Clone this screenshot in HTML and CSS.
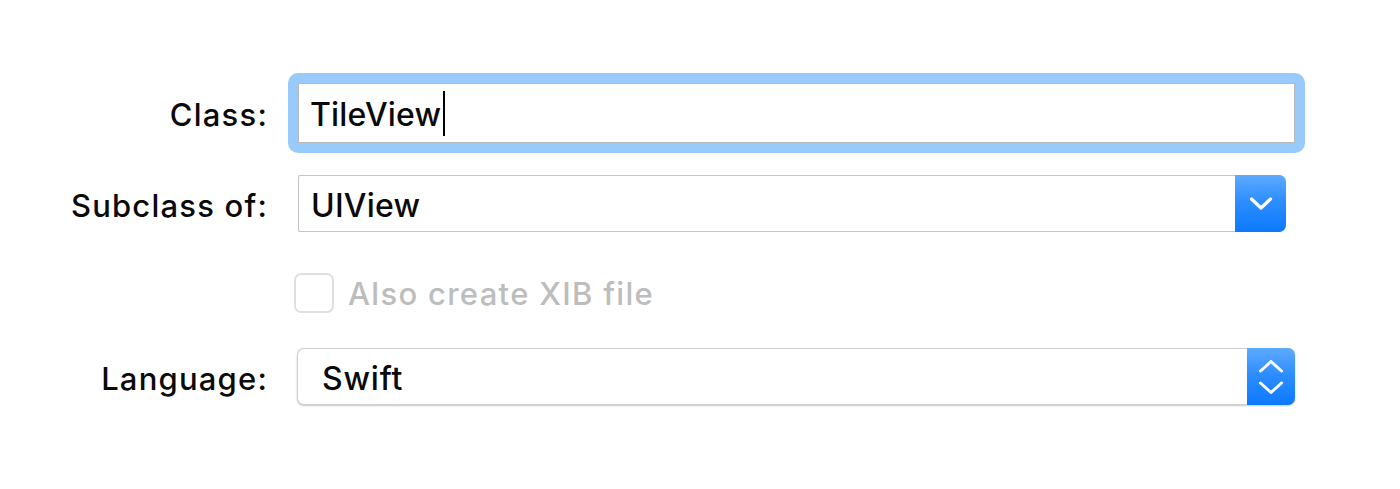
FILE: index.html
```html
<!DOCTYPE html>
<html lang="en">
<head>
<meta charset="utf-8">
<title>New File</title>
<link rel="stylesheet" href="styles.css">
</head>
<body>
<main class="form">
  <div class="row row-class">
    <label class="label">Class:</label>
    <div class="focus-ring">
      <div class="text-field"><span class="value">TileView</span><span class="caret"></span></div>
    </div>
  </div>

  <div class="row row-subclass">
    <label class="label">Subclass of:</label>
    <div class="popup popup-combo">
      <span class="value">UIView</span>
      <span class="popup-button combo-button">
        <svg width="24" height="14" viewBox="0 0 24 14"><path d="M2.5 2 L12 11 L21.5 2" fill="none" stroke="#fff" stroke-width="3.2" stroke-linecap="round" stroke-linejoin="round"/></svg>
      </span>
    </div>
  </div>

  <div class="row row-check">
    <span class="label"></span>
    <div class="checkbox-wrap">
      <span class="checkbox"></span>
      <span class="check-label">Also create XIB file</span>
    </div>
  </div>

  <div class="row row-language">
    <label class="label">Language:</label>
    <div class="popup popup-select">
      <span class="value">Swift</span>
      <span class="popup-button select-button">
        <svg width="26" height="36" viewBox="0 0 26 36"><path d="M2.5 12 L13 2.5 L23.5 12" fill="none" stroke="#fff" stroke-width="3" stroke-linecap="round" stroke-linejoin="round"/><path d="M2.5 24 L13 33.5 L23.5 24" fill="none" stroke="#fff" stroke-width="3" stroke-linecap="round" stroke-linejoin="round"/></svg>
      </span>
    </div>
  </div>
</main>
</body>
</html>
```

FILE: styles.css
```css
html, body {
  margin: 0;
  padding: 0;
  background: #ffffff;
}

body {
  font-family: Inter, "Liberation Sans", Arial, sans-serif;
  color: #111111;
  width: 1400px;
  height: 489px;
  overflow: hidden;
}

.form {
  display: flex;
  flex-direction: column;
  padding-top: 73px;
}

.row {
  display: flex;
  align-items: baseline;
}

.label {
  width: 268px;
  flex: 0 0 268px;
  text-align: right;
  font-size: 31px;
  font-weight: 500;
  letter-spacing: 1.2px;
  margin-right: -1px;
  color: #0a0a0a;
}

/* Row 1: focused text field */
.focus-ring {
  margin-left: 21px;
  padding: 10px;
  border-radius: 10px;
  background: #98cbfb;
}

.text-field {
  width: 997px;
  height: 60px;
  box-sizing: border-box;
  border: 1px solid #b9b9b9;
  background: #fff;
  display: flex;
  align-items: baseline;
  padding: 3px 0 0 11px;
  line-height: 55px;
}

.text-field .value {
  font-size: 32px;
  font-weight: 500;
  letter-spacing: 0.2px;
  color: #0a0a0a;
}

.caret {
  display: inline-block;
  width: 2px;
  height: 45px;
  background: #000;
  margin-left: 2px;
  align-self: center;
  margin-top: -2px;
}

/* Popups */
.popup {
  display: flex;
  align-items: stretch;
  background: #fff;
  box-sizing: border-box;
}

.popup .value {
  flex: 1;
  font-size: 32px;
  font-weight: 500;
  letter-spacing: 0.2px;
  color: #0a0a0a;
}

.popup-button {
  display: flex;
  align-items: center;
  justify-content: center;
  background: linear-gradient(#5eabff, #2e8eff 45%, #0b79ff);
}

.row-subclass {
  margin-top: 22px;
}

.popup-combo {
  margin-left: 31px;
  width: 988px;
  height: 57px;
  border: 1px solid #c4c4c4;
  border-right: none;
  border-radius: 2px 7px 7px 2px;
  line-height: 60px;
}

.popup-combo .value {
  padding-left: 12px;
}

.combo-button {
  width: 51px;
  margin: -1px 0;
  border-radius: 0 7px 7px 0;
}

.row-check {
  margin-top: 41px;
}

.checkbox-wrap {
  margin-left: 27px;
  display: flex;
  align-items: center;
  gap: 14px;
}

.checkbox {
  width: 40px;
  height: 40px;
  box-sizing: border-box;
  border: 2px solid #e0e0e0;
  border-radius: 7px;
  background: #fff;
}

.check-label {
  font-size: 31px;
  font-weight: 500;
  letter-spacing: 1.3px;
  color: #bdbdbd;
}

.row-language {
  margin-top: 35px;
}

.popup-select {
  margin-left: 30px;
  width: 998px;
  height: 57px;
  border: 1px solid #d0d0d0;
  border-right: none;
  border-radius: 7px;
  box-shadow: 0 1px 2px rgba(0, 0, 0, 0.22);
  line-height: 59px;
}

.popup-select .value {
  padding-left: 24px;
  letter-spacing: 0.8px;
}

.select-button {
  width: 48px;
  margin: -1px 0;
  border-radius: 0 7px 7px 0;
}
```
